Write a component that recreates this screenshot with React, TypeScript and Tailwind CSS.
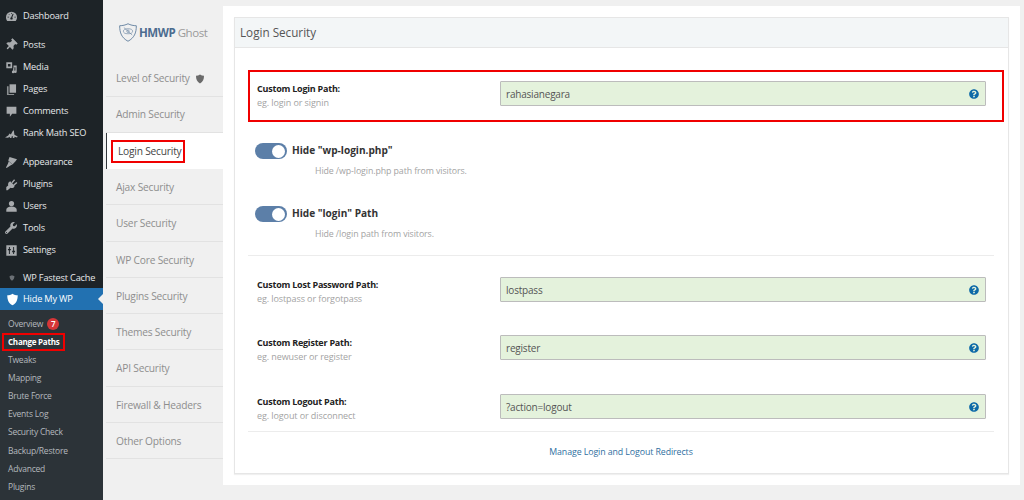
import type { ReactNode } from 'react'
import { FaWrench, FaThumbtack, FaQuestionCircle } from 'react-icons/fa'

const Shield = ({ className }: { className: string }) => (
  <svg viewBox="0 0 20 20" className={className} fill="currentColor">
    <path d="M10 1c2.500 1.600 5 2.300 8 2.400 0 7-1.800 12.100-8 15.600C3.800 15.500 2 10.400 2 3.400c3-.1 5.500-.8 8-2.400z" />
  </svg>
)

const Ico = ({ children }: { children: ReactNode }) => (
  <svg viewBox="0 0 20 20" className="w-[13px] h-[13px]" fill="currentColor">{children}</svg>
)

const groups: { label: string; icon: ReactNode }[][] = [
  [
    {
      label: 'Dashboard',
      icon: (
        <Ico>
          <path d="M3.500 17h13A8.500 8.500 0 0 0 18.500 11a8.500 8.500 0 0 0-17 0c0 2.300.8 4.400 2 6z" />
          <path d="M10 12l2.500-6" stroke="#1d2327" strokeWidth="1.600" />
          <circle cx="10" cy="13" r="1.800" fill="#1d2327" />
          <path d="M4 11h2M14.500 11h2M6 6.500l1 1M10 4.500v1.500" stroke="#1d2327" strokeWidth="1.200" />
        </Ico>
      ),
    },
  ],
  [
    { label: 'Posts', icon: <FaThumbtack className="w-[12px] h-[12px] rotate-45" /> },
    {
      label: 'Media',
      icon: (
        <Ico>
          <path fillRule="evenodd" d="M2 2h9v9H2zM4.500 4.500v4h4v-4z" />
          <path d="M13 7h5v9.500a2 2 0 1 1-2-2V9.500h-1.500V17a2 2 0 1 1-2-2.200V11h.5z" />
        </Ico>
      ),
    },
    {
      label: 'Pages',
      icon: (
        <Ico>
          <path d="M7 2h10v13H7z" />
          <path d="M3 5h2.500v12H14v1.500H3z" opacity="0.8" />
        </Ico>
      ),
    },
    {
      label: 'Comments',
      icon: (
        <Ico>
          <path d="M2.500 2.500h15v11h-6.500L7.500 18v-4.500h-5z" />
        </Ico>
      ),
    },
    {
      label: 'Rank Math SEO',
      icon: (
        <Ico>
          <path d="M0 16l5-3 2-3 2 1.500L12 6l1.500-1 1 7 5 2.500-1 1.500-4-1v2h-2.500v-3l-2 1v2H7.500v-2l-3 1.500z" />
        </Ico>
      ),
    },
  ],
  [
    {
      label: 'Appearance',
      icon: (
        <Ico>
          <path d="M7 1.500l11.500 3.500-2 2.500-5 5.500-6.500-6z" />
          <path d="M5.800 8.200l5.500 5-3 1.300-5.800 4-1-1 3-5.500z" />
        </Ico>
      ),
    },
    {
      label: 'Plugins',
      icon: (
        <Ico>
          <path d="M8 5l7 7-1.500 2.500c-1.500 1-3.500 1-5 .5L4 19H2v-5l3-2.500c-.5-1.500-.3-3.500.8-5z" />
          <path d="M10 6.500L14 2l1.500 1.500-4 4.500zM13 10l4.500-4 1.500 1.500-4.500 4z" />
        </Ico>
      ),
    },
    {
      label: 'Users',
      icon: (
        <Ico>
          <circle cx="10" cy="5.500" r="4" />
          <path d="M2 18v-3c0-3 3-5 8-5s8 2 8 5v3z" />
        </Ico>
      ),
    },
    { label: 'Tools', icon: <FaWrench className="w-[12px] h-[12px]" /> },
    {
      label: 'Settings',
      icon: (
        <Ico>
          <path fillRule="evenodd" d="M2 2h16v16H2zM6 4.500v3H4.500v2H6v6h1.500v-6H9v-2H7.500v-3zM12.500 4.500v6H11v2h1.500v3H14v-3h1.500v-2H14v-6z" />
        </Ico>
      ),
    },
  ],
]

const submenu = ['Tweaks', 'Mapping', 'Brute Force', 'Events Log', 'Security Check', 'Backup/Restore', 'Advanced', 'Plugins']

const tabs = ['Ajax Security', 'User Security', 'WP Core Security', 'Plugins Security', 'Themes Security', 'API Security', 'Firewall & Headers', 'Other Options']

function Sidebar() {
  return (
    <aside className="w-[103px] shrink-0 bg-[#1d2327] text-[9.2px] tracking-[-0.02em] text-[#e6e8ea] pt-[5px]">
      {groups.map((items, i) => (
        <div key={i} className="mb-[7px]">
          {items.map(({ label, icon }) => (
            <div key={label} className="h-[22px] flex items-center">
              <span className="w-[23px] pl-[5px] text-[#a7aaad]">{icon}</span>
              <span className="whitespace-nowrap">{label}</span>
            </div>
          ))}
        </div>
      ))}
      <div className="h-[20px] flex items-center">
        <span className="w-[23px] pl-[9px] text-[#6b7075]">
          <Shield className="w-[6px] h-[6px]" />
        </span>
        <span className="whitespace-nowrap">WP Fastest Cache</span>
      </div>
      <div className="relative h-[22px] flex items-center bg-[#2271b1] text-white">
        <span className="w-[23px] pl-[6px]">
          <Shield className="w-[13px] h-[13px]" />
        </span>
        <span>Hide My WP</span>
        <span className="absolute right-0 top-[6px] border-y-[5px] border-r-[5px] border-y-transparent border-r-[#f0f0f0]" />
      </div>
      <div className="bg-[#2c3338] text-[#b4b9be] text-[8.5px] tracking-[-0.025em] h-[190px] pt-[5px] pl-[8px]">
        <div className="h-[18px] flex items-center gap-[4px]">
          Overview
          <span className="w-[12px] h-[12px] rounded-full bg-[#d63638] text-white text-[8px] font-semibold flex items-center justify-center">7</span>
        </div>
        <div className="h-[18px] flex items-center -ml-[6px]">
          <span className="border-2 border-[#f00000] w-[63px] h-[18px] flex items-center pl-[4px] text-[8px] tracking-[-0.03em] font-bold text-white whitespace-nowrap">Change Paths</span>
        </div>
        {submenu.map((s) => (
          <div key={s} className="h-[18.2px] flex items-center whitespace-nowrap">{s}</div>
        ))}
      </div>
    </aside>
  )
}

function TabNav() {
  return (
    <nav className="w-[120px] shrink-0 text-[10.2px] tracking-[-0.02em] text-[#8e8e8e] pl-[3px]">
      <div className="h-[61px] flex items-center pl-[12px] pt-[4px] gap-[1px]">
        <svg viewBox="0 0 24 24" className="w-[20px] h-[21px] text-[#6f8aa6]" fill="none" stroke="currentColor" strokeWidth="1.200">
          <path d="M12 1.500c3 1.600 6.500 2.300 10 2.400 0 8.600-2.500 14.600-10 18.600C4.500 18.500 2 12.500 2 3.900c3.500-.1 7-.8 10-2.400z" />
          <ellipse cx="12" cy="10.500" rx="5.500" ry="3" strokeWidth="0.800" />
          <circle cx="12" cy="10.500" r="1.500" strokeWidth="0.800" />
          <path d="M7 6l10 9" strokeWidth="0.800" />
        </svg>
        <span className="text-[11.5px] tracking-[-0.04em] whitespace-nowrap text-[#9a9a9a]"><b className="font-bold text-[#4c6c8f]">HMWP</b> Ghost</span>
      </div>
      <div className="h-[36px] flex items-center gap-[5px] pl-[10px] border-b border-[#e2e2e2]">
        Level of Security
        <Shield className="w-[10px] h-[10px] text-[#6b6b6b]" />
      </div>
      <div className="h-[36px] flex items-center pl-[10px] pt-[1px] border-b border-[#e2e2e2]">Admin Security</div>
      <div className="h-[36px] flex items-center pl-[4px] pt-[1px] bg-white border-l border-[#32373c] text-[#444]">
        <span className="border-2 border-[#f00000] w-[74px] h-[23px] flex items-center pl-[5px] whitespace-nowrap">Login Security</span>
      </div>
      {tabs.map((t) => (
        <div key={t} className="h-[36.3px] flex items-center pl-[10px] pt-[2px] border-b border-[#e2e2e2] whitespace-nowrap">{t}</div>
      ))}
    </nav>
  )
}

function PathRow({ label, hint, value, className }: { label: string; hint: string; value: string; className: string }) {
  return (
    <div className={`flex items-start ${className}`}>
      <div className="w-[243px] shrink-0 pt-[1px]">
        <div className="text-[9px] tracking-[-0.025em] leading-[14px] font-bold text-[#222]">{label}</div>
        <div className="text-[9px] tracking-[-0.01em] leading-[13px] text-[#a3a3a3]">{hint}</div>
      </div>
      <div className="w-[486px] h-[25px] shrink-0 flex items-center justify-between pl-[5px] pr-[6px] pt-[1px] bg-[#e4f2dc] border border-[#bcbcbc] rounded-[1px] text-[10px] tracking-[-0.02em] text-[#555]">
        {value}
        <FaQuestionCircle className="w-[10px] h-[10px] text-[#0e6aa8]" />
      </div>
    </div>
  )
}

function Toggle({ label, hint, className }: { label: ReactNode; hint: string; className: string }) {
  return (
    <div className={className}>
      <div className="flex items-center gap-[5px] h-[16px] pl-[7px]">
        <span className="w-[32px] h-[16px] rounded-full bg-[#5c7fa8] flex justify-end items-center pr-[2px]">
          <span className="w-[13px] h-[13px] rounded-full bg-white" />
        </span>
        <span className="text-[10.1px] font-bold text-[#333]">{label}</span>
      </div>
      <div className="pl-[67px] mt-[6px] text-[8.8px] tracking-[-0.01em] leading-[13px] text-[#a3a3a3]">{hint}</div>
    </div>
  )
}

export default function App() {
  return (
    <div className="flex w-[1024px] h-[500px] overflow-hidden bg-[#f0f0f0] font-['Open_Sans',sans-serif]">
      <Sidebar />
      <TabNav />
      <main className="w-[797px] h-[479px] mt-[6px] bg-white pt-[11px] pl-[11px]">
        <section className="w-[775px] h-[457px] border border-[#e6e6e6] shadow-[0_1px_1px_rgba(0,0,0,0.06)] bg-white">
          <h2 className="h-[30px] flex items-center pl-[5px] pt-[1px] bg-[#f3f6f7] border-b border-[#e6e6e6] text-[11.7px] font-normal text-[#555]">Login Security</h2>
          <div className="pl-[13px] pt-[22px]">
            <div className="w-[756px] h-[52px] border-2 border-[#f00000] pt-[9px] pl-[7px]">
              <PathRow className="" label="Custom Login Path:" hint="eg. login or signin" value="rahasianegara" />
            </div>
            <Toggle className="mt-[21px]" label={'Hide "wp-login.php"'} hint="Hide /wp-login.php path from visitors." />
            <Toggle className="mt-[28px]" label={'Hide "login" Path'} hint="Hide /login path from visitors." />
            <div className="w-[746px] border-t border-[#ececec] mt-[14px]" />
            <PathRow className="mt-[21px] pl-[9px]" label="Custom Lost Password Path:" hint="eg. lostpass or forgotpass" value="lostpass" />
            <PathRow className="mt-[30px] pl-[9px]" label="Custom Register Path:" hint="eg. newuser or register" value="register" />
            <PathRow className="mt-[31px] pl-[9px]" label="Custom Logout Path:" hint="eg. logout or disconnect" value="?action=logout" />
            <div className="w-[746px] border-t border-[#ececec] mt-[9px]" />
            <div className="w-[746px] text-center mt-[14px] text-[8.8px] tracking-[-0.01em] leading-[13px] text-[#2f6f9f]">Manage Login and Logout Redirects</div>
          </div>
        </section>
      </main>
    </div>
  )
}
